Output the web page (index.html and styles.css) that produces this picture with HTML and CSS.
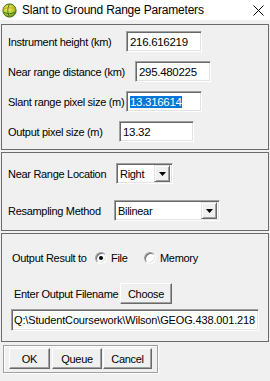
FILE: index.html
```html
<!DOCTYPE html>
<html>
<head>
<meta charset="utf-8">
<link rel="stylesheet" href="styles.css">
</head>
<body>
<div class="window">
  <div class="titlebar">
    <svg class="appicon" width="15" height="15" viewBox="0 0 15 15">
      <defs>
        <radialGradient id="g" cx="0.4" cy="0.35" r="0.7">
          <stop offset="0" stop-color="#f4f06a"/>
          <stop offset="0.6" stop-color="#b9c92a"/>
          <stop offset="1" stop-color="#5f8a1c"/>
        </radialGradient>
      </defs>
      <circle cx="7.5" cy="7.5" r="6.6" fill="url(#g)" stroke="#4d6e1a" stroke-width="1"/>
      <path d="M1.5 6 Q7.5 3.5 13.5 6" fill="none" stroke="#e3a11a" stroke-width="1.1"/>
      <path d="M1.5 9.5 Q7.5 12 13.5 9.5" fill="none" stroke="#3f7a22" stroke-width="1"/>
      <path d="M7.5 1 Q4 7.5 7.5 14" fill="none" stroke="#3f7a22" stroke-width="1"/>
    </svg>
    <span class="title">Slant to Ground Range Parameters</span>
    <svg class="close" width="11" height="11" viewBox="0 0 11 11">
      <path d="M0.5 0.5 L10.5 10.5 M10.5 0.5 L0.5 10.5" stroke="#000" stroke-width="1"/>
    </svg>
  </div>
  <div class="content">
    <div class="frame f1">
      <div class="row"><span class="lbl w118">Instrument height (km)</span><div class="field w76">216.616219</div></div>
      <div class="row"><span class="lbl w127">Near range distance (km)</span><div class="field w76">295.480225</div></div>
      <div class="row"><span class="lbl w118">Slant range pixel size (m)</span><div class="field w76"><span class="sel">13.316614</span></div></div>
      <div class="row"><span class="lbl w111">Output pixel size (m)</span><div class="field w75">13.32</div></div>
    </div>
    <div class="frame f2">
      <div class="row"><span class="lbl w108">Near Range Location</span>
        <div class="combo c57"><span class="ctext">Right</span><span class="dbtn"><svg width="7" height="4" viewBox="0 0 7 4"><path d="M0 0 H7 L3.5 4 Z" fill="#000"/></svg></span></div>
      </div>
      <div class="row"><span class="lbl w106">Resampling Method</span>
        <div class="combo c106"><span class="ctext">Bilinear</span><span class="dbtn"><svg width="7" height="4" viewBox="0 0 7 4"><path d="M0 0 H7 L3.5 4 Z" fill="#000"/></svg></span></div>
      </div>
    </div>
    <div class="frame f3">
      <div class="radiorow">
        <span class="rlabel">Output Result to</span>
        <span class="radio on"></span><span class="rtext">File</span>
        <span class="radio"></span><span class="rtext">Memory</span>
      </div>
      <div class="filerow">
        <span class="flabel">Enter Output Filename</span>
        <div class="btn choose">Choose</div>
      </div>
      <div class="field fname">Q:\StudentCoursework\Wilson\GEOG.438.001.218</div>
    </div>
    <div class="btngroup">
      <div class="btn ok">OK</div>
      <div class="btn queue">Queue</div>
      <div class="btn cancel">Cancel</div>
    </div>
  </div>
</div>
</body>
</html>
```

FILE: styles.css
```css
* { box-sizing: border-box; }
body {
  margin: 0;
  background: #f0f0f0;
  font-family: "Liberation Sans", Arial, sans-serif;
  font-size: 11px;
  letter-spacing: -0.3px;
  color: #000;
}
.window {
  width: 270px;
  height: 381px;
  background: #f0f0f0;
  overflow: hidden;
}
.titlebar {
  height: 20px;
  background: #fff;
  display: flex;
  align-items: center;
  padding-left: 2px;
}
.appicon { flex: none; }
.title {
  margin-left: 5px;
  font-family: "Liberation Sans", Arial, sans-serif;
  font-size: 12px;
  letter-spacing: -0.2px;
  white-space: nowrap;
}
.close {
  margin-left: auto;
  margin-right: 6px;
  flex: none;
}
.content {
  padding: 4px 1px 0 1px;
}
.frame {
  border: 1px solid #6b6b6b;
  width: 268px;
}
.row {
  display: flex;
  align-items: center;
}
.lbl { flex: none; white-space: nowrap; }
.w106 { width: 106px; }
.w108 { width: 108px; }
.w111 { width: 111px; }
.w118 { width: 118px; }
.w127 { width: 127px; }

.f1 {
  padding: 6px 0 7px 6px;
  display: flex;
  flex-direction: column;
  gap: 9px;
}
.field {
  height: 21px;
  background: #fff;
  border-top: 1px solid #a0a0a0;
  border-left: 1px solid #a0a0a0;
  border-right: 1px solid #fff;
  border-bottom: 1px solid #fff;
  box-shadow: inset 1px 1px 0 #696969, inset -1px -1px 0 #e3e3e3;
  padding: 0 0 0 3px;
  display: flex;
  align-items: center;
  white-space: nowrap;
  overflow: hidden;
  font-size: 11.5px;
  flex: none;
}
.w76 { width: 76px; }
.w75 { width: 75px; }
.sel {
  background: #0078d7;
  color: #fff;
}

.f2 {
  margin-top: 2px;
  padding: 10px 0 9px 6px;
  display: flex;
  flex-direction: column;
  gap: 16px;
}
.combo {
  height: 21px;
  background: #fff;
  border-top: 1px solid #a0a0a0;
  border-left: 1px solid #a0a0a0;
  border-right: 1px solid #fff;
  border-bottom: 1px solid #fff;
  box-shadow: inset 1px 1px 0 #696969, inset -1px -1px 0 #e3e3e3;
  display: flex;
  align-items: center;
  padding: 2px 2px 2px 3px;
  flex: none;
}
.c57 { width: 57px; }
.c106 { width: 106px; }
.ctext { flex: 1; white-space: nowrap; }
.dbtn {
  width: 16px;
  height: 17px;
  background: #f0f0f0;
  border-top: 1px solid #e3e3e3;
  border-left: 1px solid #e3e3e3;
  border-right: 1px solid #696969;
  border-bottom: 1px solid #696969;
  box-shadow: inset 1px 1px 0 #fff, inset -1px -1px 0 #a0a0a0;
  display: flex;
  align-items: center;
  justify-content: center;
  flex: none;
}

.f3 {
  margin-top: 2px;
  padding: 14px 0 10px 9px;
}
.radiorow {
  height: 20px;
  display: flex;
  align-items: center;
  margin-left: 1px;
}
.rlabel { width: 83px; white-space: nowrap; flex: none; }
.radio {
  width: 12px;
  height: 12px;
  border-radius: 50%;
  background: #fff;
  border: 1px solid;
  border-color: #a0a0a0 #fff #fff #a0a0a0;
  box-shadow: inset 1px 1px 0 #696969, inset -1px -1px 0 #e3e3e3;
  position: relative;
  flex: none;
}
.radio.on::after {
  content: "";
  position: absolute;
  left: 3px;
  top: 3px;
  width: 4px;
  height: 4px;
  border-radius: 50%;
  background: #000;
}
.rtext { margin-left: 4px; width: 33px; white-space: nowrap; flex: none; }
.filerow {
  margin-top: 15px;
  margin-left: 3px;
  display: flex;
  align-items: center;
  height: 21px;
}
.flabel { width: 106px; white-space: nowrap; flex: none; }
.btn {
  height: 21px;
  background: #f0f0f0;
  border-top: 1px solid #fff;
  border-left: 1px solid #fff;
  border-right: 1px solid #696969;
  border-bottom: 1px solid #696969;
  box-shadow: inset -1px -1px 0 #a0a0a0;
  display: flex;
  align-items: center;
  justify-content: center;
  white-space: nowrap;
  flex: none;
}
.choose { width: 52px; }
.fname {
  margin-top: 5px;
  margin-left: 0;
  width: 248px;
  height: 22px;
  font-size: 11px;
  letter-spacing: -0.15px;
  padding-left: 2px;
}
.btngroup {
  margin-top: 3px;
  margin-left: 2px;
  width: 155px;
  height: 28px;
  border: 1px solid #a0a0a0;
  box-shadow: inset 1px 1px 0 #fff, 1px 1px 0 #fff;
  display: flex;
  padding: 2px 0 0 5px;
}
.ok { width: 41px; }
.queue { width: 50px; margin-left: 2px; }
.cancel { width: 49px; margin-left: 1px; }
```
